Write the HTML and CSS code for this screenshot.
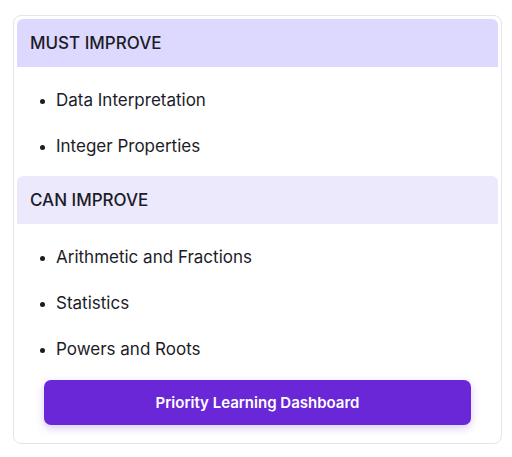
FILE: index.html
```html
<!DOCTYPE html>
<html lang="en">
<head>
    <meta charset="UTF-8">
    <meta name="viewport" content="width=device-width, initial-scale=1.0">
    <title>Improvement Areas</title>
    <link rel="stylesheet" href="styles.css">
</head>
<body>
    <div class="card">
        <div class="band band-must">MUST IMPROVE</div>
        <ul class="topics">
            <li>Data Interpretation</li>
            <li>Integer Properties</li>
        </ul>
        <div class="band band-can">CAN IMPROVE</div>
        <ul class="topics">
            <li>Arithmetic and Fractions</li>
            <li>Statistics</li>
            <li>Powers and Roots</li>
        </ul>
        <button class="dashboard-btn" type="button">Priority Learning Dashboard</button>
    </div>
</body>
</html>
```

FILE: styles.css
```css
body {
    font-family: Inter, "Noto Sans", sans-serif;
    background-color: #ffffff;
    color: #1c1c28;
    margin: 0;
    padding: 15px 0 0 13px;
}
.card {
    width: 481px;
    height: 421px;
    border: 1px solid #e2e5ec;
    border-radius: 8px;
    padding: 3px;
    display: flex;
    flex-direction: column;
}
.band {
    height: 48px;
    display: flex;
    align-items: center;
    padding-left: 13px;
    font-size: 17px;
    font-weight: 500;
    border-radius: 6px 6px 0 0;
}
.band-must {
    background-color: #ddd8fe;
}
.band-can {
    background-color: #ece9fd;
}
.topics {
    margin: 0;
    padding: 21px 0 18px 39px;
    font-size: 17px;
    line-height: 24px;
}
.topics li::marker {
    font-size: 14px;
}
.topics li + li {
    margin-top: 22px;
}
.dashboard-btn {
    margin: 1px 27px 0;
    height: 45px;
    border: none;
    border-radius: 7px;
    background-color: #6a27d8;
    color: white;
    font-family: inherit;
    font-size: 15px;
    font-weight: 600;
    box-shadow: 0 3px 8px rgba(106, 39, 216, 0.25);
    cursor: pointer;
}
```
